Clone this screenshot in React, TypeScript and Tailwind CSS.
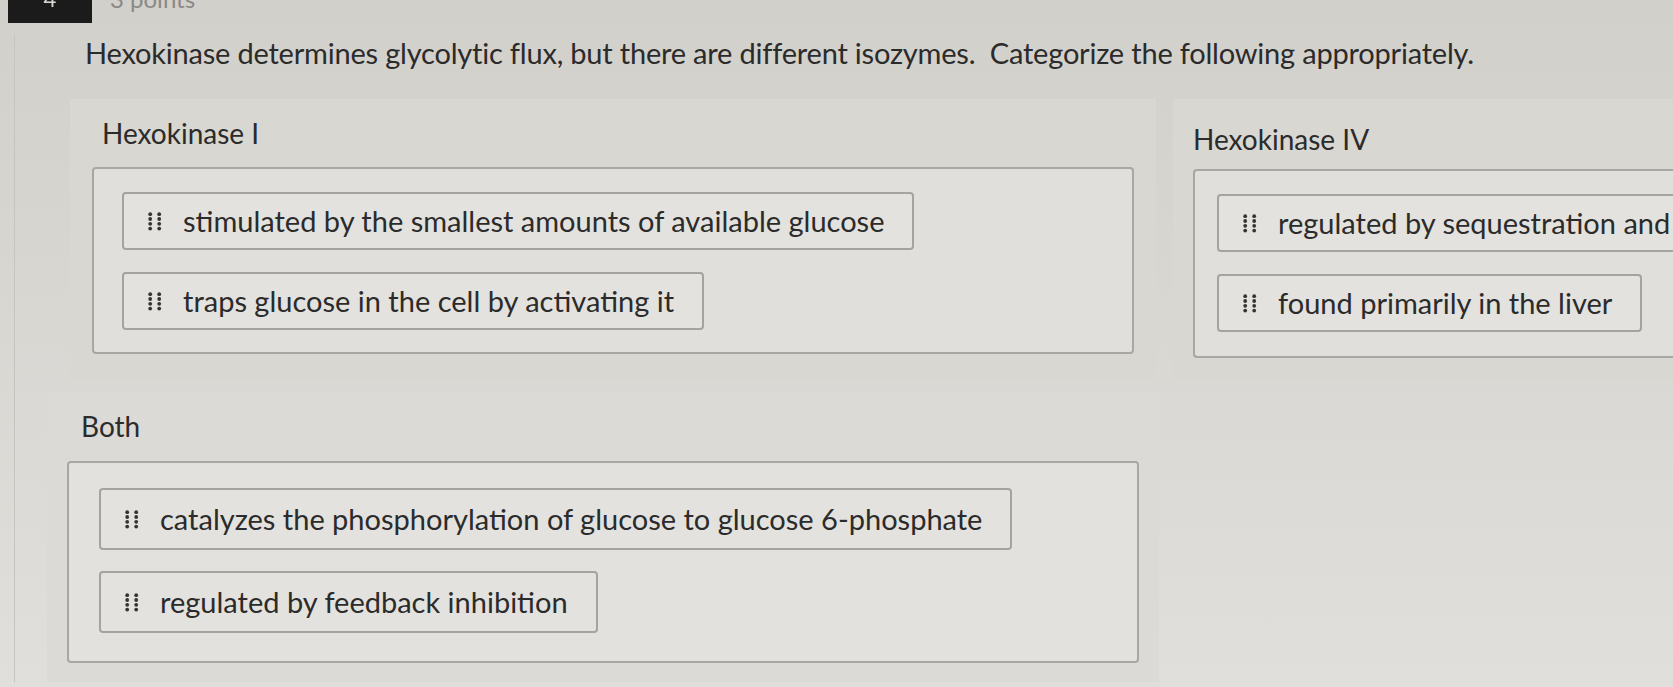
import React from 'react';

type Bucket = {
  title: string;
  items: string[];
};

const hexI: Bucket = {
  title: 'Hexokinase I',
  items: [
    'stimulated by the smallest amounts of available glucose',
    'traps glucose in the cell by activating it',
  ],
};

const hexIV: Bucket = {
  title: 'Hexokinase IV',
  items: ['regulated by sequestration and', 'found primarily in the liver'],
};

const both: Bucket = {
  title: 'Both',
  items: [
    'catalyzes the phosphorylation of glucose to glucose 6-phosphate',
    'regulated by feedback inhibition',
  ],
};

const DragHandle = () => (
  <svg width="14" height="19" viewBox="0 0 14 19" fill="#333333" className="shrink-0">
    <circle cx="2.2" cy="2.2" r="1.9" />
    <circle cx="11.2" cy="2.2" r="1.9" />
    <circle cx="2.2" cy="7" r="1.9" />
    <circle cx="11.2" cy="7" r="1.9" />
    <circle cx="2.2" cy="11.8" r="1.9" />
    <circle cx="11.2" cy="11.8" r="1.9" />
    <circle cx="2.2" cy="16.6" r="1.9" />
    <circle cx="11.2" cy="16.6" r="1.9" />
  </svg>
);

const Chip = ({ text, tall, wide }: { text: string; tall?: boolean; wide?: boolean }) => (
  <div
    className={`flex items-center gap-[21px] pl-[24px] ${wide ? 'pr-[80px]' : 'pr-[28px]'} ${
      tall ? 'h-[62px]' : 'h-[58px]'
    } w-fit whitespace-nowrap rounded-[4px] border-2 border-[#a4a39f] bg-[#e3e2de] text-[29px] text-[#2b2b2b]`}
  >
    <DragHandle />
    <span>{text}</span>
  </div>
);

const App = () => {
  return (
    <div
      className="relative h-[687px] w-[1673px] overflow-hidden bg-linear-to-b from-[#d2d0cb] to-[#e0dfdb] text-[#2b2b2b]"
      style={{ fontFamily: 'Lato, "Open Sans", sans-serif' }}
    >
      {/* question header strip */}
      <div className="flex h-[23px] items-start">
        <div className="ml-[8px] flex h-[23px] w-[84px] items-start justify-center overflow-hidden bg-[#1b1b1b]">
          <span className="mt-[-12px] text-[22px] leading-[22px] text-[#d8d8d8]">4</span>
        </div>
        <span className="ml-[18px] mt-[-13px] text-[24px] leading-[24px] text-[#8a8985]">3 points</span>
      </div>

      <div className="ml-[14px] border-l border-[#c6c4bf]">
        <p className="mt-[12px] pl-[70px] text-[29px] leading-[36px] tracking-[-0.2px]">
          Hexokinase determines glycolytic flux, but there are different isozymes.&nbsp; Categorize the
          following appropriately.
        </p>

        {/* Hexokinase I / Hexokinase IV */}
        <div className="mt-[28px] ml-[55px] grid grid-cols-[1086px_600px] gap-x-[17px]">
          <section className="bg-[#d9d7d2] px-[22px] pt-[17px] pb-[24px]">
            <h3 className="pl-[10px] text-[28px] leading-[34px]">{hexI.title}</h3>
            <div className="mt-[17px] flex flex-col gap-[22px] rounded-[4px] border-2 border-[#a8a7a3] bg-[#e0dfdb] pt-[23px] pb-[22px] pl-[28px]">
              {hexI.items.map((t) => (
                <Chip key={t} text={t} />
              ))}
            </div>
          </section>

          <section className="bg-[#d9d7d2] pl-[20px] pt-[23px] pb-[19px]">
            <h3 className="text-[28px] leading-[34px]">{hexIV.title}</h3>
            <div className="mt-[13px] flex flex-col gap-[22px] rounded-l-[4px] border-y-2 border-l-2 border-[#a8a7a3] bg-[#e0dfdb] pt-[23px] pb-[24px] pl-[22px]">
              {hexIV.items.map((t, i) => (
                <Chip key={t} text={t} wide={i === 0} />
              ))}
            </div>
          </section>
        </div>

        {/* Both */}
        <section className="mt-[14px] ml-[32px] w-[1112px] bg-[#dcdad6] px-[20px] pt-[17px] pb-[19px]">
          <h3 className="pl-[14px] text-[28px] leading-[34px]">{both.title}</h3>
          <div className="mt-[18px] flex flex-col gap-[21px] rounded-[4px] border-2 border-[#a8a7a3] bg-[#e2e1dd] pt-[25px] pb-[28px] pl-[30px]">
            {both.items.map((t) => (
              <Chip key={t} text={t} tall />
            ))}
          </div>
        </section>
      </div>
    </div>
  );
};

export default App;
